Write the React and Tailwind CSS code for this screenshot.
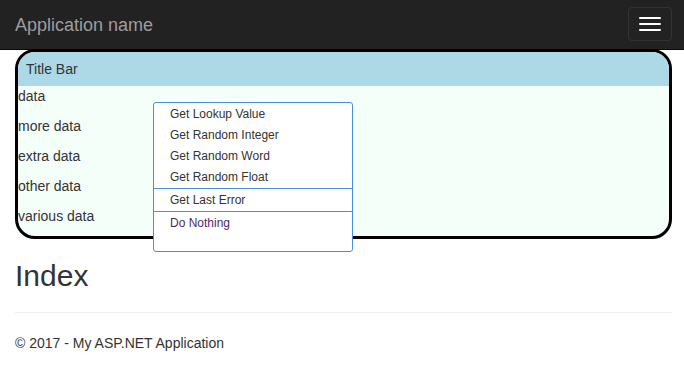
// Bootstrap-style ASP.NET page: navbar, rounded data panel with a context menu, index heading, footer.
const ROWS = ["data", "more data", "extra data", "other data", "various data"];

function MenuItem({ children, visited }) {
  return (
    <li className={`h-[21px] pl-4 text-[12px] leading-[21px] ${visited ? "text-[#4e2a63]" : "text-[#333]"}`}>
      {children}
    </li>
  );
}

function ContextMenu() {
  return (
    <ul className="absolute left-[153px] top-[102px] h-[150px] w-[200px] rounded-[3px] border border-[#4a8fdb] bg-white pt-px font-['Liberation_Sans',Arial,sans-serif]">
      <MenuItem>Get Lookup Value</MenuItem>
      <MenuItem>Get Random Integer</MenuItem>
      <MenuItem>Get Random Word</MenuItem>
      <MenuItem>Get Random Float</MenuItem>
      <li className="mb-px h-px bg-[#4a8fdb]" />
      <MenuItem>Get Last Error</MenuItem>
      <li className="mb-px h-px bg-[#4a8fdb]" />
      <MenuItem visited>Do Nothing</MenuItem>
    </ul>
  );
}

export default function App() {
  return (
    <div className="relative min-h-[367px] bg-white font-['Liberation_Sans',Arial,sans-serif] text-[14px] leading-[20px] text-[#333]">
      <nav className="flex h-[50px] items-center justify-between border-b border-[#080808] bg-[#222] pl-[15px] pr-[12px]">
        <span className="text-[18px] leading-[20px] text-[#9d9d9d]">Application name</span>
        <button className="mt-[-2px] flex h-[34px] w-[44px] flex-col items-center justify-center gap-[4px] rounded-[4px] border border-[#333]">
          <span className="block h-[2px] w-[22px] rounded-[1px] bg-white" />
          <span className="block h-[2px] w-[22px] rounded-[1px] bg-white" />
          <span className="block h-[2px] w-[22px] rounded-[1px] bg-white" />
        </button>
      </nav>

      <div className="pl-[15px] pr-[12px]">
        <div className="mt-[-1px] overflow-hidden rounded-[20px] border-[3px] border-black bg-[#f5fffa]">
          <div className="flex h-[34px] items-center bg-[#add8e6] pl-[8px]">Title Bar</div>
          <div className="pb-[10px]">
            {ROWS.map((r) => (
              <div key={r} className="mb-[10px] h-[20px] last:mb-0">
                {r}
              </div>
            ))}
          </div>
        </div>

        <h2 className="mt-[20px] mb-[10px] text-[30px] font-normal leading-[33px]">Index</h2>
        <hr className="mt-[20px] mb-[20px] border-t border-[#eee]" />
        <footer>
          <p>© 2017 - My ASP.NET Application</p>
        </footer>
      </div>

      <ContextMenu />
    </div>
  );
}
